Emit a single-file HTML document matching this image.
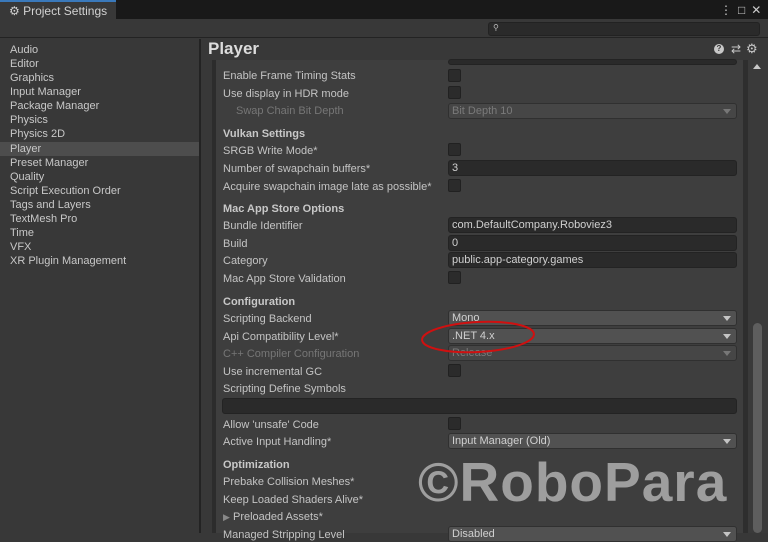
<!DOCTYPE html>
<html><head><style>
*{margin:0;padding:0;box-sizing:border-box}
body{width:768px;height:533px;overflow:hidden;background:#383838;font-family:"Liberation Sans",sans-serif;font-size:11px;color:#c4c4c4;position:relative}
.a{position:absolute}
.l{position:absolute;left:10px;font-size:11px;color:#c8c8c8;line-height:14px}
.r{position:absolute;left:223px;font-size:11px;color:#c4c4c4;line-height:14px}
.h{font-weight:bold;color:#c8c8c8}
.dis{color:#767676}
.f{position:absolute;left:448px;width:289px;height:16px;background:#2a2a2a;border:1px solid #232323;border-radius:3px;color:#d0d0d0;font-size:11px;line-height:14px;padding-left:3px}
.d{position:absolute;left:448px;width:289px;height:16px;background:#515151;border:1px solid #303030;border-radius:3px;color:#d0d0d0;font-size:11px;line-height:14px;padding-left:3px}
.d:after{content:"";position:absolute;right:5px;top:5px;border-left:4px solid transparent;border-right:4px solid transparent;border-top:5px solid #c4c4c4}
.dd{background:#464646;color:#7a7a7a}
.dd:after{border-top-color:#777}
.c{position:absolute;left:448px;width:13px;height:13px;background:#2b2b2b;border:1px solid #212121;border-radius:2px}
</style></head><body>
<div class="a" style="left:0;top:0;width:768px;height:19px;background:#191919"></div>
<div class="a" style="left:0;top:0;width:116px;height:20px;background:#383838;border-top:2px solid #3a79bb"></div>
<div class="a" style="left:9px;top:4px;font-size:12px;color:#d2d2d2">⚙ Project Settings</div>
<div class="a" style="left:720px;top:3px;color:#ccc;font-size:12px;letter-spacing:6px">⋮□✕</div>
<div class="a" style="left:0;top:19px;width:768px;height:19px;background:#383838;border-bottom:1px solid #232323"></div>
<div class="a" style="left:488px;top:22px;width:272px;height:14px;background:#2a2a2a;border-radius:3px;border:1px solid #222"></div>
<div class="a" style="left:493px;top:23px;font-size:8px;color:#bbb">⚲</div>
<div class="a" style="left:199px;top:39px;width:2px;height:494px;background:#232323"></div>
<div class="a" style="left:0;top:142px;width:199px;height:14px;background:#4d4d4d"></div>
<div class="l" style="top:43px">Audio</div>
<div class="l" style="top:57px">Editor</div>
<div class="l" style="top:71px">Graphics</div>
<div class="l" style="top:85px">Input Manager</div>
<div class="l" style="top:99px">Package Manager</div>
<div class="l" style="top:113px">Physics</div>
<div class="l" style="top:127px">Physics 2D</div>
<div class="l" style="top:142px">Player</div>
<div class="l" style="top:156px">Preset Manager</div>
<div class="l" style="top:170px">Quality</div>
<div class="l" style="top:184px">Script Execution Order</div>
<div class="l" style="top:198px">Tags and Layers</div>
<div class="l" style="top:212px">TextMesh Pro</div>
<div class="l" style="top:226px">Time</div>
<div class="l" style="top:240px">VFX</div>
<div class="l" style="top:254px">XR Plugin Management</div>
<!-- right content -->
<div class="a" style="left:212px;top:60px;width:4px;height:473px;background:#2c2c2c"></div>
<div class="a" style="left:216px;top:60px;width:527px;height:473px;background:#3e3e3e"></div>
<div class="a" style="left:743px;top:60px;width:5px;height:473px;background:#2e2e2e"></div>
<div class="a" style="left:748px;top:60px;width:20px;height:473px;background:#3a3a3a"></div>
<div class="a" style="left:753px;top:323px;width:9px;height:210px;background:#5e5e5e;border-radius:5px"></div>
<div class="a" style="left:753px;top:64px;border-left:4px solid transparent;border-right:4px solid transparent;border-bottom:5px solid #c8c8c8"></div>
<div class="a" style="left:201px;top:39px;width:567px;height:21px;background:#383838"></div>
<div class="a" style="left:208px;top:39px;font-size:17px;font-weight:bold;color:#dcdcdc">Player</div>
<div class="a" style="left:714px;top:44px;width:10px;height:10px;border-radius:50%;background:#c8c8c8;color:#383838;font-size:8px;font-weight:bold;text-align:center;line-height:10px">?</div>
<div class="a" style="left:731px;top:42px;color:#c8c8c8;font-size:12px">⇄</div>
<div class="a" style="left:746px;top:41px;color:#c8c8c8;font-size:13px">⚙</div>
<div class="f" style="top:59px;height:6px"></div>
<div class="r" style="top:69px">Enable Frame Timing Stats</div><div class="c" style="top:69px"></div>
<div class="r" style="top:87px">Use display in HDR mode</div><div class="c" style="top:86px"></div>
<div class="r dis" style="top:104px;left:236px">Swap Chain Bit Depth</div><div class="d dd" style="top:103px">Bit Depth 10</div>
<div class="r h" style="top:127px">Vulkan Settings</div>
<div class="r" style="top:144px">SRGB Write Mode*</div><div class="c" style="top:143px"></div>
<div class="r" style="top:162px">Number of swapchain buffers*</div><div class="f" style="top:160px">3</div>
<div class="r" style="top:180px">Acquire swapchain image late as possible*</div><div class="c" style="top:179px"></div>
<div class="r h" style="top:202px">Mac App Store Options</div>
<div class="r" style="top:219px">Bundle Identifier</div><div class="f" style="top:217px">com.DefaultCompany.Roboviez3</div>
<div class="r" style="top:237px">Build</div><div class="f" style="top:235px">0</div>
<div class="r" style="top:254px">Category</div><div class="f" style="top:252px">public.app-category.games</div>
<div class="r" style="top:272px">Mac App Store Validation</div><div class="c" style="top:271px"></div>
<div class="r h" style="top:295px">Configuration</div>
<div class="r" style="top:312px">Scripting Backend</div><div class="d" style="top:310px">Mono</div>
<div class="r" style="top:330px">Api Compatibility Level*</div><div class="d" style="top:328px">.NET 4.x</div>
<div class="r dis" style="top:347px">C++ Compiler Configuration</div><div class="d dd" style="top:345px">Release</div>
<div class="r" style="top:365px">Use incremental GC</div><div class="c" style="top:364px"></div>
<div class="r" style="top:382px">Scripting Define Symbols</div>
<div class="f" style="left:222px;width:515px;top:398px"></div>
<div class="r" style="top:418px">Allow 'unsafe' Code</div><div class="c" style="top:417px"></div>
<div class="r" style="top:435px">Active Input Handling*</div><div class="d" style="top:433px">Input Manager (Old)</div>
<div class="r h" style="top:458px">Optimization</div>
<div class="r" style="top:475px">Prebake Collision Meshes*</div>
<div class="r" style="top:493px">Keep Loaded Shaders Alive*</div>
<div class="r" style="top:510px"><span style="color:#888;font-size:9px">▶</span> Preloaded Assets*</div>
<div class="r" style="top:528px">Managed Stripping Level</div><div class="d" style="top:526px">Disabled</div>
<svg class="a" style="left:420px;top:318px" width="122" height="38"><ellipse cx="58" cy="19" rx="56" ry="15" fill="none" stroke="#d01010" stroke-width="2" transform="rotate(-3 58 19)"/></svg>
<div class="a" style="left:418px;top:452px;font-size:55px;font-weight:bold;color:rgba(175,175,175,0.85);letter-spacing:1px;line-height:60px">©RoboPara</div>
</body></html>
